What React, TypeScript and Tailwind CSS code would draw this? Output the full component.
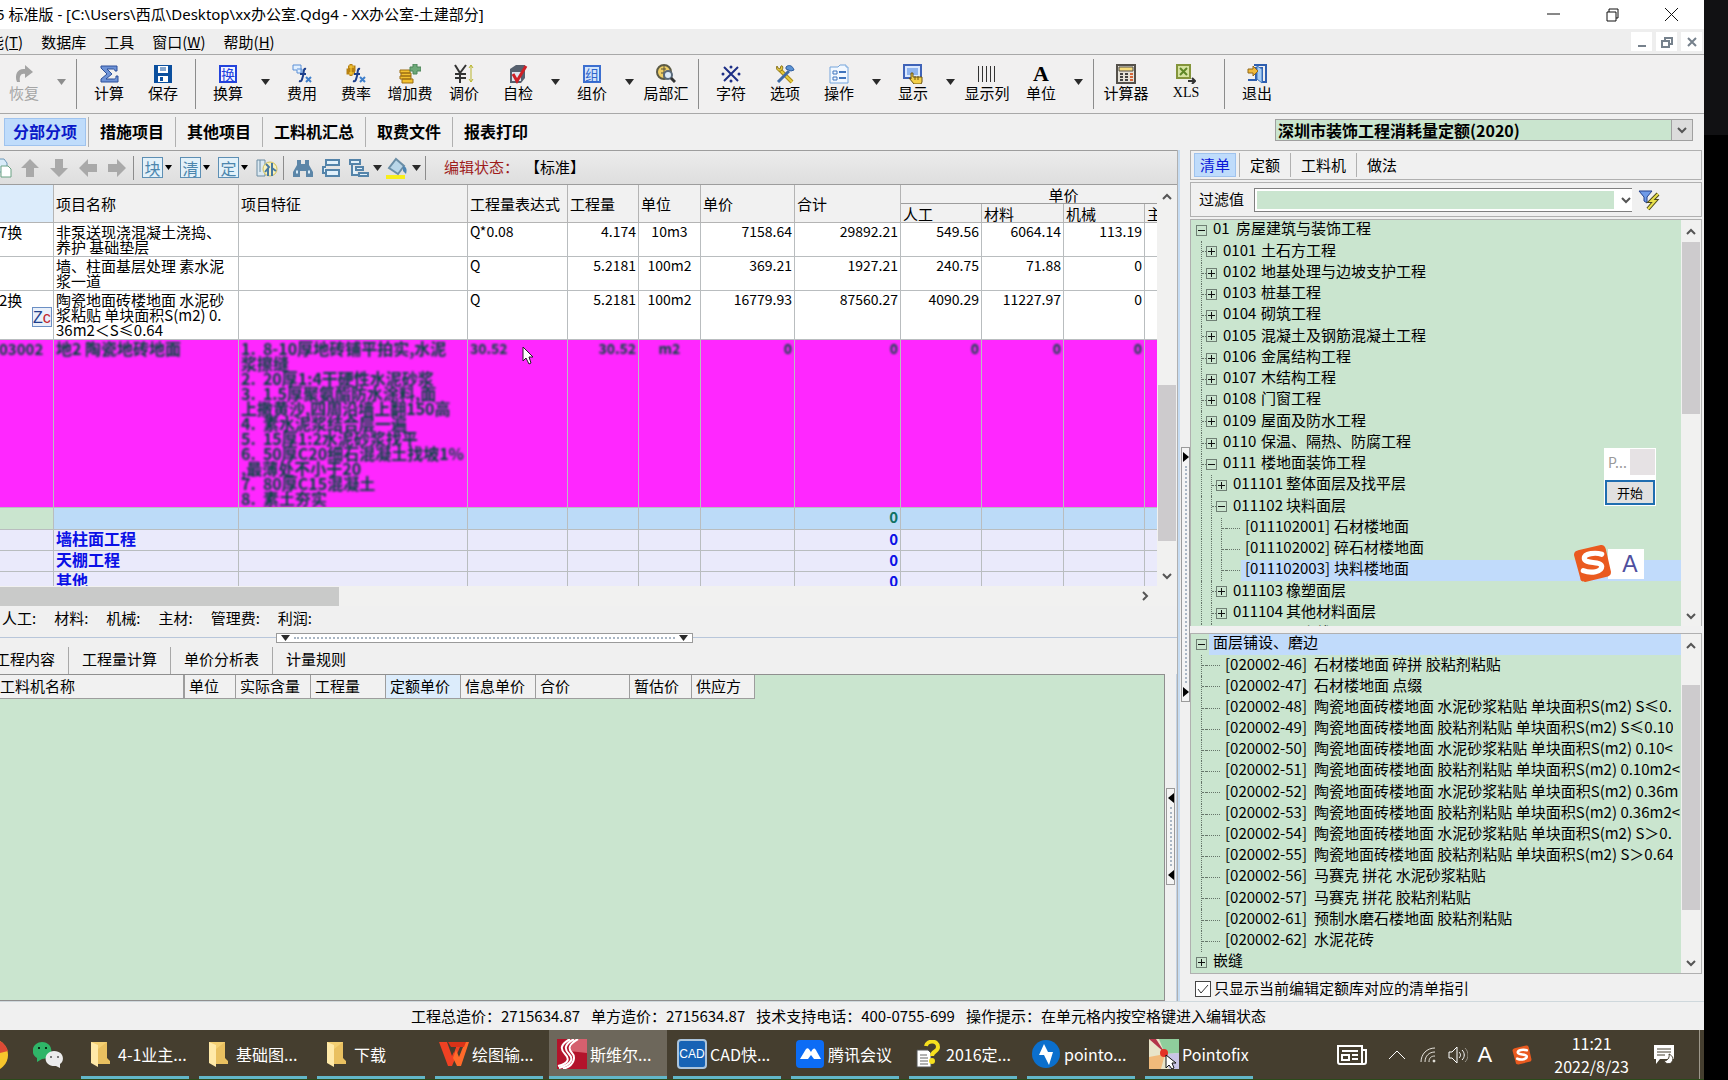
import type { ReactNode } from "react";

const menus = [
  { label: "能", key: "T" },
  { label: "数据库" },
  { label: "工具" },
  { label: "窗口", key: "W" },
  { label: "帮助", key: "H" }
];

type Tool = { label?: string; icon?: ReactNode; kind?: "sep" | "arrow"; disabled?: boolean; wide?: boolean };

function BoxChar({ char, fill }: { char: string; fill?: boolean }) {
  return (
    <span
      className={`flex size-[18px] items-center justify-center border-2 text-[14px] leading-none ${
        fill ? "border-[#3c6fd0] bg-[#d3e6fb] text-[#2f66cc]" : "border-[#2343dc] bg-[#f2f5ff] text-[#1f3fe0]"
      }`}
    >
      {char}
    </span>
  );
}

const icons = {
  redo: (
    <svg viewBox="0 0 20 20" className="size-5">
      <path d="M3 18C0 10 4 4 11 5V1l8 7-8 6v-4C7 9 5 12 6 18z" fill="#a3a3a3" />
    </svg>
  ),
  sum: (
    <svg viewBox="0 0 20 20" className="size-5">
      <path d="M2 2h16v5h-2c0-2-1-2-3-2H8l5 5-6 5h7c2 0 3 0 3-3h2v6H2v-3l6-5-6-6z" fill="#6d92d6" stroke="#2c4f9a" />
    </svg>
  ),
  save: (
    <svg viewBox="0 0 20 20" className="size-5">
      <path d="M1 1h18v18H1z" fill="#0b4f9e" />
      <path d="M5 2h10v7H5z" fill="#fff" />
      <path d="M7 4h6M7 6h6" stroke="#0b4f9e" />
      <path d="M5 12h10v6H5z" fill="#fff" />
      <path d="M7 13h3v4H7z" fill="#0b4f9e" />
    </svg>
  ),
  fee: (
    <svg viewBox="0 0 20 20" className="size-5" fill="none">
      <path d="M1 1h8v8H5V6H1zM5 5h5v5" fill="#e2f0ff" stroke="#5b8fd6" />
      <path d="M14 5c-3-1-2 4-3 7s-1 6-4 5M8 10h6" stroke="#1c3f8c" strokeWidth="2" />
      <path d="M14 13l5 5M19 13l-5 5" stroke="#3f7fcb" strokeWidth="2" />
    </svg>
  ),
  rate: (
    <svg viewBox="0 0 20 20" className="size-5" fill="none">
      <path d="M5 0v12M2 3h6v3H2v3h7" stroke="#b88112" strokeWidth="3" />
      <path d="M5 1v10M3 3h5M3 9h5" stroke="#ffd23b" />
      <path d="M14 5c-3-1-2 4-3 7s-1 6-4 5M8 10h6" stroke="#1c3f8c" strokeWidth="2" />
      <path d="M14 13l5 5M19 13l-5 5" stroke="#3f7fcb" strokeWidth="2" />
    </svg>
  ),
  coins: (
    <svg viewBox="0 0 22 20" className="h-5 w-[22px]">
      <path d="M1 6h10v3H1zM2 9h10v3H2zM1 12h11v3H1zM3 15h11v4H3z" fill="#f2c230" stroke="#9b6d12" />
      <path d="M14 0h4v3h4v4h-4v3h-4V7h-3V3h3z" fill="#6da878" stroke="#4c8458" />
    </svg>
  ),
  yen: (
    <svg viewBox="0 0 20 20" className="size-5" fill="none">
      <path d="M1 1l5 8 6-8M6 9v10M1 10h11M1 14h11" stroke="#333" strokeWidth="2" />
      <path d="M17 1v17M15 4l2-3 2 3M15 15l2 3 2-3" stroke="#b9b52c" />
    </svg>
  ),
  check: (
    <svg viewBox="0 0 20 20" className="size-5">
      <path d="M2 5l6-4h9v13l-4 5H2z" fill="#56606e" />
      <path d="M4 8h9v9H4z" fill="#dfe4ee" />
      <path d="M5 10l4 7L18 2" fill="none" stroke="#cf2026" strokeWidth="3" />
    </svg>
  ),
  search: (
    <svg viewBox="0 0 20 20" className="size-5">
      <circle cx="8" cy="8" r="7" fill="#f0cf66" stroke="#5d5b45" strokeWidth="2" />
      <path d="M8 2v12M5 5h5M5 9h4" stroke="#57523a" strokeWidth="1" />
      <circle cx="12" cy="11" r="4" fill="#dcebf9" stroke="#59697a" strokeWidth="2" />
      <path d="M15 14l4 4" stroke="#333" strokeWidth="3" />
    </svg>
  ),
  symbol: (
    <svg viewBox="0 0 20 20" className="size-5" fill="#1d2f86">
      <path d="M3 3l14 14M17 3L3 17" stroke="#1d2f86" strokeWidth="2" />
      <circle cx="10" cy="3" r="1.5" />
      <circle cx="10" cy="17" r="1.5" />
      <circle cx="2" cy="10" r="1.5" />
      <circle cx="18" cy="10" r="1.5" />
    </svg>
  ),
  tools: (
    <svg viewBox="0 0 20 20" className="size-5" fill="none">
      <path d="M5 6l12 12" stroke="#a88a17" strokeWidth="4" />
      <path d="M5 6l12 12" stroke="#e8cc3c" strokeWidth="2" />
      <path d="M2 2c-2 4 3 7 5 4s0-5-1-4l-1 3-2-1z" fill="#e8cc3c" stroke="#8a7420" />
      <path d="M14 7L3 18" stroke="#3f6aa5" strokeWidth="3" />
      <path d="M11 3c3-3 7-1 8 3l-3 1-5-2z" fill="#5c93d4" stroke="#2c5b9e" />
    </svg>
  ),
  form: (
    <svg viewBox="0 0 20 20" className="size-5" fill="none">
      <path d="M1 3h8l2-2h6v2h2v16H1z" fill="#f2f8ff" stroke="#74a5dc" />
      <path d="M4 7h4v3H4zM4 13h4v3H4z" stroke="#3f74bd" />
      <path d="M10 8h7M10 14h7" stroke="#3f74bd" strokeWidth="2" />
    </svg>
  ),
  display: (
    <svg viewBox="0 0 20 20" className="size-5">
      <path d="M1 1h17v13H1z" fill="#dbe9ff" stroke="#3f63b8" strokeWidth="2" />
      <path d="M4 4h11v7H4z" fill="#8fb4ee" />
      <path d="M8 9h2v4h9v5l-1 2h-7l-5-6 2 1z" fill="#f3d04a" stroke="#6b5310" />
      <path d="M12 12v4M15 12v4" stroke="#6b5310" />
    </svg>
  ),
  columns: (
    <svg viewBox="0 0 20 20" className="size-5">
      <path d="M1.500 2v16M5.500 2v16M9.500 2v16M13.500 2v16M17.500 2v16" stroke="#333" />
    </svg>
  ),
  letter: <span className="font-['Liberation_Serif',serif] text-[22px] leading-5 font-bold">A</span>,
  calculator: (
    <svg viewBox="0 0 20 20" className="size-5">
      <path d="M1 1h18v18H1z" fill="#e6e3da" stroke="#54504a" strokeWidth="2" />
      <path d="M3 3h14v4H3z" fill="#f6dc7c" stroke="#54504a" />
      <path d="M4 10h3M9 10h3M4 13h3M9 13h3M4 16h3M9 16h3" stroke="#444" strokeWidth="2" />
      <path d="M14 10h3M14 13h3M14 16h3" stroke="#d4663a" strokeWidth="2" />
    </svg>
  ),
  xls: (
    <svg viewBox="0 0 20 20" className="size-5" fill="none">
      <path d="M1 1h13v13H1z" fill="#d6e3a0" stroke="#84953b" strokeWidth="2" />
      <path d="M4 4l7 7M11 4l-7 7" stroke="#5f8727" strokeWidth="2" />
      <path d="M12 17h6M16 14l3 3-3 3" stroke="#333" strokeWidth="2" />
    </svg>
  ),
  exit: (
    <svg viewBox="0 0 20 20" className="size-5">
      <path d="M7 1h12v17h-4V4H9v12H1" fill="none" stroke="#2f5fb0" strokeWidth="2" />
      <path d="M10 2l5 3v14l-5-4z" fill="#a9cff6" stroke="#3f74bd" />
      <path d="M1 5h5V2l5 5-5 5V9H1z" fill="#f0b93a" stroke="#92681a" />
    </svg>
  )
};

const tools: Tool[] = [
  { label: "恢复", icon: icons.redo, disabled: true },
  { kind: "arrow", disabled: true },
  { kind: "sep" },
  { label: "计算", icon: icons.sum },
  { label: "保存", icon: icons.save },
  { kind: "sep" },
  { label: "换算", icon: <BoxChar char="换" /> },
  { kind: "arrow" },
  { label: "费用", icon: icons.fee },
  { label: "费率", icon: icons.rate },
  { label: "增加费", icon: icons.coins },
  { label: "调价", icon: icons.yen },
  { label: "自检", icon: icons.check },
  { kind: "arrow" },
  { label: "组价", icon: <BoxChar char="组" fill /> },
  { kind: "arrow" },
  { label: "局部汇", icon: icons.search },
  { kind: "sep" },
  { label: "字符", icon: icons.symbol },
  { label: "选项", icon: icons.tools },
  { label: "操作", icon: icons.form },
  { kind: "arrow" },
  { label: "显示", icon: icons.display },
  { kind: "arrow" },
  { label: "显示列", icon: icons.columns },
  { label: "单位", icon: icons.letter },
  { kind: "arrow" },
  { kind: "sep" },
  { label: "计算器", icon: icons.calculator },
  { label: "XLS", icon: icons.xls, wide: true },
  { kind: "sep" },
  { label: "退出", icon: icons.exit }
];

const mainTabs = ["分部分项", "措施项目", "其他项目", "工料机汇总", "取费文件", "报表打印"];

const itemRows = [
  {
    code: "7换",
    name: "非泵送现浇混凝土浇捣、\n养护 基础垫层",
    height: "h-[34px]",
    values: ["Q*0.08", "4.174", "10m3", "7158.64", "29892.21", "549.56", "6064.14", "113.19"]
  },
  {
    code: "",
    name: "墙、柱面基层处理 素水泥\n浆一道",
    height: "h-[34px]",
    values: ["Q", "5.2181", "100m2", "369.21", "1927.21", "240.75", "71.88", "0"]
  },
  {
    code: "2换",
    name: "陶瓷地面砖楼地面 水泥砂\n浆粘贴 单块面积S(m2) 0.\n36m2＜S≤0.64",
    height: "h-[49px]",
    badge: true,
    values: ["Q", "5.2181", "100m2", "16779.93", "87560.27", "4090.29", "11227.97", "0"]
  }
];

const feature = `1.  8-10厚地砖铺平拍实,水泥
浆擦缝
2.  20厚1:4干硬性水泥砂浆
3.  1.5厚聚氨酯防水涂料,面
上撒黄沙,四周沿墙上翻150高
4.  素水泥浆结合层一遍
5.  15厚1:2水泥砂浆找平
6.  50厚C20细石混凝土找坡1%
,最薄处不小于20
7.  80厚C15混凝土
8.  素土夯实`;

const sections = ["", "墙柱面工程", "天棚工程", "其他"];

const detailTabs = ["工程内容", "工程量计算", "单价分析表", "计量规则"];

const detailColumns = [
  { label: "工料机名称", width: "w-[185px] border-r-2" },
  { label: "单位", width: "w-[51px]" },
  { label: "实际含量", width: "w-[75px]" },
  { label: "工程量", width: "w-[75px]" },
  { label: "定额单价", width: "w-[75px] bg-[#dcecfb]" },
  { label: "信息单价", width: "w-[75px]" },
  { label: "合价", width: "w-[94px]" },
  { label: "暂估价", width: "w-[62px]" },
  { label: "供应方", width: "w-[63px]" }
];

type Node = { depth: number; code?: string; name: string; state?: "open" | "closed"; selected?: boolean };

const listTree: Node[] = [
  { depth: 0, code: "01", name: "房屋建筑与装饰工程", state: "open" },
  { depth: 1, code: "0101", name: "土石方工程", state: "closed" },
  { depth: 1, code: "0102", name: "地基处理与边坡支护工程", state: "closed" },
  { depth: 1, code: "0103", name: "桩基工程", state: "closed" },
  { depth: 1, code: "0104", name: "砌筑工程", state: "closed" },
  { depth: 1, code: "0105", name: "混凝土及钢筋混凝土工程", state: "closed" },
  { depth: 1, code: "0106", name: "金属结构工程", state: "closed" },
  { depth: 1, code: "0107", name: "木结构工程", state: "closed" },
  { depth: 1, code: "0108", name: "门窗工程", state: "closed" },
  { depth: 1, code: "0109", name: "屋面及防水工程", state: "closed" },
  { depth: 1, code: "0110", name: "保温、隔热、防腐工程", state: "closed" },
  { depth: 1, code: "0111", name: "楼地面装饰工程", state: "open" },
  { depth: 2, code: "011101", name: "整体面层及找平层", state: "closed" },
  { depth: 2, code: "011102", name: "块料面层", state: "open" },
  { depth: 3, code: "[011102001]", name: "石材楼地面" },
  { depth: 3, code: "[011102002]", name: "碎石材楼地面" },
  { depth: 3, code: "[011102003]", name: "块料楼地面", selected: true },
  { depth: 2, code: "011103", name: "橡塑面层", state: "closed" },
  { depth: 2, code: "011104", name: "其他材料面层", state: "closed" },
  { depth: 2, code: "011105", name: "踢脚线", state: "closed" }
];

const quotaTree: Node[] = [
  { depth: 0, name: "面层铺设、磨边", state: "open", selected: true },
  { depth: 1, code: "[020002-46]", name: "石材楼地面 碎拼 胶粘剂粘贴" },
  { depth: 1, code: "[020002-47]", name: "石材楼地面 点缀" },
  { depth: 1, code: "[020002-48]", name: "陶瓷地面砖楼地面 水泥砂浆粘贴 单块面积S(m2) S≤0." },
  { depth: 1, code: "[020002-49]", name: "陶瓷地面砖楼地面 胶粘剂粘贴 单块面积S(m2) S≤0.10" },
  { depth: 1, code: "[020002-50]", name: "陶瓷地面砖楼地面 水泥砂浆粘贴 单块面积S(m2) 0.10<" },
  { depth: 1, code: "[020002-51]", name: "陶瓷地面砖楼地面 胶粘剂粘贴 单块面积S(m2) 0.10m2<" },
  { depth: 1, code: "[020002-52]", name: "陶瓷地面砖楼地面 水泥砂浆粘贴 单块面积S(m2) 0.36m" },
  { depth: 1, code: "[020002-53]", name: "陶瓷地面砖楼地面 胶粘剂粘贴 单块面积S(m2) 0.36m2<" },
  { depth: 1, code: "[020002-54]", name: "陶瓷地面砖楼地面 水泥砂浆粘贴 单块面积S(m2) S＞0." },
  { depth: 1, code: "[020002-55]", name: "陶瓷地面砖楼地面 胶粘剂粘贴 单块面积S(m2) S＞0.64" },
  { depth: 1, code: "[020002-56]", name: "马赛克 拼花 水泥砂浆粘贴" },
  { depth: 1, code: "[020002-57]", name: "马赛克 拼花 胶粘剂粘贴" },
  { depth: 1, code: "[020002-61]", name: "预制水磨石楼地面 胶粘剂粘贴" },
  { depth: 1, code: "[020002-62]", name: "水泥花砖" },
  { depth: 0, name: "嵌缝", state: "closed" }
];

function codeWidth(code: string) {
  if (code.length > 6) return "w-[89px]";
  if (code.length === 6) return "w-[53px]";
  if (code.length === 4) return "w-[38px]";
  return "w-[23px]";
}

function Tree({ nodes, label, className }: { nodes: Node[]; label: string; className: string }) {
  return (
    <ul aria-label={label} className={`flex min-w-0 flex-1 flex-col ${className}`}>
      {nodes.map((node) => (
        <li key={(node.code ?? "") + node.name} className="flex min-h-0 flex-1 items-center pl-[5px] whitespace-nowrap">
          {Array.from({ length: node.depth }, (_, i) => (
            <span key={i} className="flex h-full w-[10px] shrink-0 items-center pl-[5px]">
              <span className="h-full border-l border-dotted border-[#66756a]" />
              {i === node.depth - 1 && <span className="flex-1 border-t border-dotted border-[#66756a]" />}
            </span>
          ))}
          {node.state ? (
            <button
              type="button"
              aria-label={node.state === "open" ? "收起" : "展开"}
              className="mr-[2px] flex size-[11px] shrink-0 items-center justify-center border border-[#6f7f74]"
            >
              <svg viewBox="0 0 7 7" className="size-[7px]" stroke="#111">
                <path d={node.state === "open" ? "M0 3.500h7" : "M0 3.500h7M3.500 0v7"} />
              </svg>
            </button>
          ) : (
            <span className="mr-px w-[14px] shrink-0 border-t border-dotted border-[#66756a]" />
          )}
          <span className={`flex h-full min-w-0 flex-1 items-center pb-1 pl-1 ${node.selected ? "bg-[#c1dbfb]" : ""}`}>
            {node.code && <span className={`shrink-0 ${codeWidth(node.code)}`}>{node.code}</span>}
            <span className="overflow-hidden">{node.name}</span>
          </span>
        </li>
      ))}
    </ul>
  );
}

function Chevron({ turn = "" }: { turn?: string }) {
  return (
    <svg viewBox="0 0 12 12" className={`size-3 ${turn}`} fill="none" stroke="#555" strokeWidth="2">
      <path d="M2 8l4-4 4 4" />
    </svg>
  );
}

function VScroll({ before, thumb }: { before: string; thumb: string }) {
  return (
    <div className="flex w-5 shrink-0 flex-col items-center bg-[#f1f1f0]">
      <span className={`flex w-full shrink-0 justify-center pt-[6px] ${before}`}>
        <Chevron />
      </span>
      <span className={`w-[18px] bg-[#cdcbcd] ${thumb}`} />
      <span className="mt-auto pb-1">
        <Chevron turn="rotate-180" />
      </span>
    </div>
  );
}

function Caret({ muted }: { muted?: boolean }) {
  return (
    <svg viewBox="0 0 9 6" className="h-[6px] w-[9px]" fill={muted ? "#8d8d8d" : "#2a2a2a"}>
      <path d="M0 0h9L4.500 6z" />
    </svg>
  );
}

function Toolbar() {
  return (
    <div className="flex h-[59px] shrink-0 items-stretch border-b border-[#a8a8a8] bg-[#f1f0f0]">
      <div className="-ml-[3px] flex">
        {tools.map((tool, i) => {
          if (tool.kind === "sep")
            return (
              <span key={i} className="flex w-[11px] justify-center py-1">
                <span className="border-l border-[#8c8c8c]" />
              </span>
            );
          if (tool.kind === "arrow")
            return (
              <button key={i} type="button" aria-label="更多" className="flex w-5 items-center justify-center pb-1">
                <Caret muted={tool.disabled} />
              </button>
            );
          return (
            <button
              key={i}
              type="button"
              className={`flex flex-col items-center pt-2 ${
                tool.wide ? "w-[66px] font-['Liberation_Serif',serif] text-[14px]" : "w-[54px] text-[15px]"
              } leading-4 ${tool.disabled ? "text-[#a5a5a5]" : ""}`}
            >
              <span className="flex h-[22px] items-center">{tool.icon}</span>
              {tool.label}
            </button>
          );
        })}
      </div>
    </div>
  );
}

function GlyphButton({ char }: { char: string }) {
  return (
    <button type="button" className="flex items-center gap-[2px]">
      <span className="flex size-[21px] items-center justify-center border border-[#5d8fb4] bg-[#e3f1f9] text-[16px] leading-none text-[#4c86ad]">
        {char}
      </span>
      <svg viewBox="0 0 7 5" className="h-[5px] w-[7px]">
        <path d="M0 0h7L3.500 5z" />
      </svg>
    </button>
  );
}

function Divider() {
  return <span className="h-6 border-l border-[#8c8c8c]" />;
}

function EditBar() {
  const arrows = ["", "rotate-180", "-rotate-90", "rotate-90"];
  return (
    <div className="flex h-[35px] shrink-0 items-center border-y border-[#9d9d9d] bg-linear-to-b from-[#ececec] to-[#dedede] text-[15px]">
      <svg viewBox="0 0 20 20" className="-ml-2 size-5" fill="none" stroke="#6d98b8">
        <path d="M4 1h8l3 4v9H4z" fill="#d9ecf9" />
        <path d="M9 8h7l3 3v8H9z" fill="#fff" stroke="#6aa284" />
      </svg>
      <div className="ml-2 flex gap-[9px]">
        {arrows.map((turn) => (
          <svg key={turn} viewBox="0 0 20 20" className={`size-5 ${turn}`} fill="#a9a9a9">
            <path d="M10 1l9 9h-5v9H6v-9H1z" />
          </svg>
        ))}
      </div>
      <div className="ml-[6px] flex items-center gap-2">
        <Divider />
        <GlyphButton char="块" />
        <GlyphButton char="清" />
        <GlyphButton char="定" />
        <svg viewBox="0 0 22 20" className="h-5 w-[22px]" fill="none">
          <path d="M1 2h8v16H1zM4 2v12" fill="#dbe9f2" stroke="#6c8da3" />
          <circle cx="14" cy="11" r="7" fill="#f8f1bd" stroke="#d1c05a" />
          <path d="M10 6l3 3-4 5M12 10v8M16 5v13M16 10l4 3" stroke="#4879a1" strokeWidth="2" />
        </svg>
      </div>
      <div className="ml-[5px] flex items-center gap-[9px]">
        <Divider />
        <svg viewBox="0 0 20 18" className="h-[18px] w-5" fill="#5c86a8">
          <path d="M4 1h4v4h4V1h4v5l4 7v5h-7v-6H7v6H0v-5l4-7z" />
          <path d="M3 13h2M15 13h2" stroke="#d8ecf9" strokeWidth="3" />
        </svg>
        <svg viewBox="0 0 18 18" className="size-[18px]" fill="#e2f1fb" stroke="#5484aa" strokeWidth="2">
          <path d="M4 1h13v5H4zM4 11h13v6H4zM4 8H1v6h3" />
        </svg>
        <svg viewBox="0 0 20 18" className="h-[18px] w-5" fill="#e2f1fb" stroke="#5484aa" strokeWidth="2">
          <path d="M1 1h10v4H1zM7 8h7v3H7zM10 14h9v3h-9zM3 5v11h6" />
        </svg>
      </div>
      <span className="mr-1 ml-1">
        <Caret />
      </span>
      <svg viewBox="0 0 22 22" className="h-[22px] w-[22px]">
        <path d="M0 18h19v4H0z" fill="#f7ee1c" />
        <path d="M10 2l8 7-6 8-9-6z" fill="#b9d6e8" stroke="#6b8ea6" strokeWidth="2" />
        <path d="M17 9c4 1 4 4 3 8l-3-3z" fill="#4f86b3" />
      </svg>
      <span className="mr-1 ml-1">
        <Caret />
      </span>
      <Divider />
      <span className="ml-[18px] text-[#9e1c1c]">编辑状态：</span>
      <span className="ml-[6px]">【标准】</span>
    </div>
  );
}

const th = "overflow-hidden border-r border-b border-[#b4b4b4] pl-[2px] text-left font-normal whitespace-nowrap";
const td = "border-r border-b border-[#b9bdbf] px-[2px] pt-px align-top overflow-hidden whitespace-nowrap";

function valueAlign(i: number) {
  if (i === 0) return "text-left";
  if (i === 2) return "text-center";
  return "text-right";
}

function ItemTable() {
  return (
    <div className="h-full min-w-0 flex-1 overflow-hidden bg-white">
      <table className="w-[1226px] table-fixed border-separate border-spacing-0 text-[15px] leading-[15px]">
        <colgroup>
          <col className="w-[54px]" />
          <col className="w-[185px]" />
          <col className="w-[229px]" />
          <col className="w-[100px]" />
          <col className="w-[71px]" />
          <col className="w-[62px]" />
          <col className="w-[94px]" />
          <col className="w-[106px]" />
          <col className="w-[81px]" />
          <col className="w-[82px]" />
          <col className="w-[81px]" />
          <col className="w-[81px]" />
        </colgroup>
        <thead className="bg-[#f1f1f1]">
          <tr className="h-[19px]">
            <th rowSpan={2} aria-label="编码" className={`${th} bg-[#dcecfb]`} />
            {["项目名称", "项目特征", "工程量表达式", "工程量", "单位", "单价", "合计"].map((head) => (
              <th key={head} rowSpan={2} className={th}>
                {head}
              </th>
            ))}
            <th colSpan={4} className="border-b border-[#9d9d9d] text-center font-normal">
              单价
            </th>
          </tr>
          <tr className="h-[19px]">
            {["人工", "材料", "机械", "主材"].map((head) => (
              <th key={head} className={th}>
                {head}
              </th>
            ))}
          </tr>
        </thead>
        <tbody>
          {itemRows.map((row) => (
            <tr key={row.name} className={row.height}>
              <td className={td}>
                {row.code && <div className="-ml-[3px]">{row.code}</div>}
                {row.badge && (
                  <div className="ml-[30px] h-5 w-5 border border-[#6b8fc4] bg-[#e9f0fa] font-['Liberation_Sans',sans-serif] text-[16px] leading-5">
                    <span className="text-[#1f3f8c]">Z</span>
                    <span className="text-[#c01f2c]">c</span>
                  </div>
                )}
              </td>
              <td className={`${td} whitespace-pre`}>{row.name}</td>
              <td className={td} />
              {row.values.map((value, i) => (
                <td key={i} className={`${td} text-[14px] ${valueAlign(i)}`}>
                  {value}
                </td>
              ))}
              <td className={td} />
            </tr>
          ))}
          <tr className="h-[168px] bg-[#ff27ff] font-bold text-[#004a3c]">
            <td className={td}>
              <div className="-ml-[3px] blur-[1px]">03002</div>
            </td>
            <td className={`${td} text-[16px]`}>
              <div className="blur-[1px]">地2 陶瓷地砖地面</div>
            </td>
            <td className={`${td} text-[16px]`}>
              <div className="whitespace-pre blur-[1px]">{feature}</div>
            </td>
            {["30.52", "30.52", "m2", "0", "0", "0", "0", "0"].map((value, i) => (
              <td key={i} className={`${td} text-[14px] ${valueAlign(i)}`}>
                <div className="blur-[1px]">{value}</div>
              </td>
            ))}
            <td className={td} />
          </tr>
          {sections.map((name, i) => (
            <tr
              key={name}
              className={`font-bold ${i === 0 ? "h-[22px] bg-[#bcdbf8] text-[#0f7264]" : "h-[21px] bg-[#eaeafb] text-[#0a10e6]"}`}
            >
              <td className={`${td} ${i === 0 ? "bg-[#cae5cf]" : ""}`} />
              <td className={`${td} text-[16px]`}>{name}</td>
              <td className={td} />
              <td className={td} />
              <td className={td} />
              <td className={td} />
              <td className={td} />
              <td className={`${td} text-right`}>0</td>
              <td className={td} />
              <td className={td} />
              <td className={td} />
              <td className={td} />
            </tr>
          ))}
        </tbody>
      </table>
    </div>
  );
}

function SideHandle({ direction, className }: { direction: "left" | "right"; className: string }) {
  const path = direction === "left" ? "M7 0v10L1 5z" : "M1 0v10l6-5z";
  return (
    <div className={`flex w-[9px] shrink-0 flex-col items-center border border-[#9a9a9a] bg-[#f4f4f4] py-1 ${className}`}>
      <svg viewBox="0 0 8 10" className="h-[10px] w-2 shrink-0">
        <path d={path} />
      </svg>
      <span className="my-1 flex-1 border-l-2 border-dotted border-[#a9b6c4]" />
      <svg viewBox="0 0 8 10" className="h-[10px] w-2 shrink-0">
        <path d={path} />
      </svg>
    </div>
  );
}

function DetailPanel() {
  return (
    <div className="flex min-h-0 flex-1 flex-col">
      <div className="flex h-[26px] shrink-0 items-center gap-[18px] pb-px pl-[2px] text-[15px]">
        {["人工:", "材料:", "机械:", "主材:", "管理费:", "利润:"].map((label) => (
          <span key={label}>{label}</span>
        ))}
      </div>
      <div className="flex h-[11px] shrink-0 items-center">
        <span className="w-[276px] border-t border-[#b8c6da]" />
        <div className="flex h-[10px] w-[417px] items-center gap-1 border border-[#9a9a9a] bg-white px-1">
          <Caret />
          <span className="flex-1 border-t-2 border-dotted border-[#a9b6c4]" />
          <Caret />
        </div>
        <span className="flex-1 border-t border-[#b8c6da]" />
      </div>
      <div className="flex h-[31px] shrink-0 items-stretch pt-1 text-[15px]">
        {detailTabs.map((tab, i) => (
          <button
            key={tab}
            type="button"
            className={`px-[13px] pb-[3px] ${i === 0 ? "-ml-[18px]" : "border-l border-[#a8a8a8]"}`}
          >
            {tab}
          </button>
        ))}
      </div>
      <div className="flex min-h-0 flex-1">
        <div className="min-w-0 flex-1 border-t border-r border-b border-[#8f8f8f] bg-[#cae5cf]">
          <table className="w-[755px] table-fixed border-separate border-spacing-0 text-[15px]">
            <thead>
              <tr className="h-6 bg-[#f1f1f1]">
                {detailColumns.map((column) => (
                  <th
                    key={column.label}
                    className={`border-r border-b border-[#9d9d9d] pb-[2px] pl-1 text-left leading-5 font-normal whitespace-nowrap first:pl-0 ${column.width}`}
                  >
                    {column.label}
                  </th>
                ))}
              </tr>
            </thead>
          </table>
        </div>
        <div className="flex w-3 shrink-0 flex-col items-center border-r border-[#c3d2e4]">
          <SideHandle direction="left" className="mt-[114px] h-[97px]" />
        </div>
      </div>
    </div>
  );
}

function RightPanel() {
  return (
    <div className="flex w-[512px] shrink-0 flex-col text-[15px]">
      <div className="flex h-[30px] shrink-0 items-stretch border border-[#b0b0b0] p-[2px] leading-5">
        {["清单", "定额", "工料机", "做法"].map((tab, i) => (
          <button
            key={tab}
            type="button"
            className={
              i === 0
                ? "mr-[3px] ml-px border border-[#9fc3ee] bg-[#bfdcfb] px-[5px] text-[#0a18d8]"
                : "border-l border-[#b0b0b0] px-[10px]"
            }
          >
            {tab}
          </button>
        ))}
      </div>
      <div className="mt-[2px] flex h-[35px] shrink-0 items-center border border-[#b0b0b0] pl-2">
        <label htmlFor="filter" className="mr-[10px]">
          过滤值
        </label>
        <div className="flex h-6 w-[378px] items-center border border-r-0 border-[#808080] bg-white py-[2px] pl-[2px]">
          <input id="filter" className="h-[18px] min-w-0 flex-1 bg-[#cae5cf] outline-none" />
          <span className="flex w-[18px] justify-end">
            <Chevron turn="rotate-180" />
          </span>
        </div>
        <svg viewBox="0 0 22 22" className="ml-[6px] size-[22px]">
          <path d="M1 2h13L9 8v6l-3-2V8z" fill="#6f9be8" stroke="#23418c" />
          <path d="M20 5l-7 7h4l-7 8" fill="none" stroke="#4d4a1c" strokeWidth="4" />
          <path d="M20 5l-7 7h4l-7 8" fill="none" stroke="#e9e04a" strokeWidth="2" />
        </svg>
      </div>
      <div className="mt-[2px] flex h-[407px] shrink-0 overflow-hidden border-x border-t border-[#b0b0b0] bg-[#cae5cf]">
        <Tree nodes={listTree} label="清单" className="h-[425px]" />
        <VScroll before="h-[22px]" thumb="h-[172px]" />
      </div>
      <div className="mt-[7px] flex min-h-0 flex-1 overflow-hidden border border-[#b0b0b0] bg-[#cae5cf]">
        <Tree nodes={quotaTree} label="定额指引" className="h-full" />
        <VScroll before="h-[51px]" thumb="h-[225px]" />
      </div>
      <label className="flex h-[27px] shrink-0 items-center gap-[3px] pt-[2px] pl-[5px]">
        <span className="grid size-4">
          <input
            type="checkbox"
            defaultChecked
            className="peer col-start-1 row-start-1 size-4 appearance-none border border-[#444] bg-white"
          />
          <svg
            viewBox="0 0 16 16"
            className="pointer-events-none invisible col-start-1 row-start-1 size-4 peer-checked:visible"
            fill="none"
            stroke="#333"
          >
            <path d="M3 8l3 4 7-8" />
          </svg>
        </span>
        只显示当前编辑定额库对应的清单指引
      </label>
    </div>
  );
}

const folder = (
  <svg viewBox="0 0 20 26" className="h-[26px] w-5">
    <path d="M1 1h16v20H1z" fill="#f3cf72" />
    <path d="M17 1v16l3 3v3H8V8z" fill="#e9c060" />
    <path d="M1 1l7 3v22l-7-4z" fill="#ffe9a8" />
  </svg>
);

const tasks = [
  { label: "4-1业主...", icon: folder },
  { label: "基础图...", icon: folder },
  { label: "下载", icon: folder },
  {
    label: "绘图输...",
    icon: (
      <svg viewBox="0 0 30 26" className="h-[26px] w-[30px]">
        <path d="M0 1h8l5 14 4-9h4l-8 19H9z" fill="#ef4123" />
        <path d="M17 9l3 7L26 1h4l-8 24h-4l-4-8z" fill="#ff6a2a" />
        <path d="M9 1h18l-2 5H12z" fill="#d93218" />
        <path d="M12 6l3 6 2-6z" fill="#453e2f" />
      </svg>
    )
  },
  {
    label: "斯维尔...",
    active: true,
    icon: (
      <svg viewBox="0 0 30 30" className="size-[30px]" fill="none">
        <path d="M0 0h30v30H0z" fill="#b3132b" />
        <path d="M18 0h12v14L12 12z" fill="#d5606e" />
        <path
          d="M13 0C2 6 4 11 8 15s5 9-7 12M17 0C6 6 8 11 12 15s4 10-10 14M21 0C10 6 12 11 15 14s4 12-9 16"
          stroke="#fff"
          strokeWidth="2"
        />
      </svg>
    )
  },
  {
    label: "CAD快...",
    icon: (
      <span className="flex size-[30px] items-center justify-center rounded-sm border-2 border-[#aac4dc] bg-[#1763b5] font-['Liberation_Sans',sans-serif] text-[12px] text-white">
        CAD
      </span>
    )
  },
  {
    label: "腾讯会议",
    icon: (
      <svg viewBox="0 0 28 28" className="size-7">
        <rect width="28" height="28" rx="4" fill="#0c6cf5" />
        <path d="M4 19l6-10c2-2 3 0 5 3 3-5 4-4 6 0l4 7h-7l-3-4-3 4z" fill="#fff" />
      </svg>
    )
  },
  {
    label: "2016定...",
    icon: (
      <svg viewBox="0 0 26 28" className="h-7 w-[26px]">
        <path d="M2 10h11l3 3v14H2z" fill="#fff" stroke="#555" />
        <path d="M5 15h7M5 18h8M5 21h8M5 24h8" stroke="#666" />
        <path d="M11 6c1-6 12-6 12 1 0 5-6 4-6 9" fill="none" stroke="#f6df1e" strokeWidth="4" />
        <circle cx="17" cy="21" r="3" fill="#f6df1e" />
      </svg>
    )
  },
  {
    label: "pointo...",
    icon: (
      <svg viewBox="0 0 28 28" className="size-7">
        <circle cx="14" cy="14" r="14" fill="#0b6fcd" />
        <path d="M12 4l-5 11h5l5 10 4-13h-5z" fill="#fff" />
      </svg>
    )
  },
  {
    label: "Pointofix",
    icon: (
      <svg viewBox="0 0 30 30" className="size-[30px]">
        <path d="M0 0h30v30H0z" fill="#e8e4c9" />
        <path d="M10 0h20v14L16 15z" fill="#8fce9c" />
        <path d="M16 15l14-1v16H20z" fill="#c8c4e6" />
        <path d="M0 18l16-3-4 15H0z" fill="#f1ba7b" />
        <path d="M0 0h7l9 14z" fill="#b3344a" />
        <circle cx="15" cy="14" r="4" fill="#e33125" />
        <path d="M17 16v13l3-3 3 4 2-1-2-5h4z" fill="#fff" stroke="#111" />
      </svg>
    )
  }
];

function SogouMark({ className }: { className: string }) {
  return (
    <svg viewBox="0 0 38 38" className={className} fill="none">
      <path d="M5 6l22-5c3 0 4 1 5 4l5 22c0 3-1 4-4 5l-21 5c-3 0-5-1-5-4L1 11c0-3 1-4 4-5z" fill="#ea5a1f" />
      <path
        d="M28 10c-6-2-17-1-17 4 0 6 17 2 17 8 0 5-10 7-18 4"
        stroke="#fff"
        strokeWidth="5"
        strokeLinecap="round"
      />
    </svg>
  );
}

function Taskbar() {
  return (
    <div className="flex h-[50px] shrink-0 border-b border-[#2b4a1a] bg-[#453e2f] text-[16px] text-white">
      <div className="flex w-[81px] shrink-0 items-center overflow-hidden">
        <svg viewBox="0 0 32 32" className="-ml-6 size-8 shrink-0">
          <circle cx="16" cy="16" r="16" fill="#f7c52c" />
          <path d="M16 16V0c8 0 14 5 16 12z" fill="#dc4a36" />
        </svg>
        <svg viewBox="0 0 30 26" className="ml-[25px] h-[26px] w-[30px] shrink-0">
          <path d="M9 0c12 0 13 17 0 17l-5 3v-4C-4 11 0 0 9 0z" fill="#2fb568" />
          <circle cx="6" cy="6" r="1" />
          <circle cx="13" cy="6" r="1" />
          <path d="M21 9c10 0 11 10 6 13v4l-4-2c-14 1-13-15-2-15z" fill="#ececec" />
          <circle cx="18" cy="15" r="1" fill="#555" />
          <circle cx="25" cy="15" r="1" fill="#555" />
        </svg>
      </div>
      {tasks.map((task) => (
        <button
          key={task.label}
          type="button"
          className={`flex shrink-0 items-center gap-[3px] border-b-[3px] border-[#62b7c9] pt-[2px] whitespace-nowrap ${
            task.active ? "mr-[6px] -ml-1 w-[118px] bg-[#6d675b] pl-2" : "mr-[10px] w-[108px] pl-1"
          }`}
        >
          <span className="flex w-[30px] shrink-0 justify-center">{task.icon}</span>
          {task.label}
        </button>
      ))}
      <div className="ml-auto flex items-center">
        <svg viewBox="0 0 30 20" className="h-5 w-[30px]" fill="none" stroke="#fff" strokeWidth="2">
          <path d="M1 1h24v18H3c-1 0-2-1-2-2zM25 5h4v12c0 1-1 2-2 2h-2M5 6h16M5 10h7v5H5zM15 10h6M15 14h6" />
        </svg>
        <svg viewBox="0 0 18 10" className="ml-[21px] h-[10px] w-[18px]" fill="none" stroke="#fff">
          <path d="M1 9l8-8 8 8" />
        </svg>
        <svg viewBox="0 0 16 16" className="ml-[14px] size-4" fill="none" stroke="#e6e3dc">
          <path d="M1 15C1 7 7 1 15 1M5 15c0-6 4-10 10-10M9 15c0-4 2-6 6-6" />
          <circle cx="14" cy="14" r="1" fill="#fff" />
        </svg>
        <svg viewBox="0 0 20 18" className="ml-3 h-[18px] w-5" fill="none" stroke="#fff">
          <path d="M1 6h3l5-5v16l-5-5H1zM11 6c2 2 2 4 0 6M14 4c3 3 3 7 0 10" />
          <path d="M17 2c4 4 4 10 0 14" stroke="#99948a" />
        </svg>
        <span className="ml-[10px] font-['Liberation_Sans',sans-serif] text-[22px]">A</span>
        <SogouMark className="ml-5 size-5" />
        <div className="ml-[22px] text-center leading-[23px]">
          <div>11:21</div>
          <div>2022/8/23</div>
        </div>
        <svg viewBox="0 0 20 20" className="mx-[25px] size-5">
          <path d="M0 0h20v14H6l-4 5v-5H0z" fill="#fff" />
          <path d="M3 4h14M3 7h14M3 10h8" stroke="#453e2f" />
          <path d="M15 9c1 4-2 7-5 7 2 4 9 4 9-3-1-2-2-3-4-4z" fill="#fff" stroke="#453e2f" />
        </svg>
        <span className="mr-1 h-[49px] border-l border-[#9d978a]" />
      </div>
    </div>
  );
}

export default function App() {
  return (
    <div className="relative flex h-screen overflow-hidden bg-black font-['Noto_Sans_CJK_SC',sans-serif] text-black">
      <div className="flex min-w-0 flex-1 flex-col bg-[#f0f0f0]">
        <header className="flex h-[29px] shrink-0 items-center justify-between bg-white text-[15px] whitespace-nowrap">
          <h1 className="-ml-1 font-['Noto_Sans','Noto_Sans_CJK_SC',sans-serif]">
            5 标准版 - [C:\Users\西瓜\Desktop\xx办公室.Qdg4 - XX办公室-土建部分]
          </h1>
          <div className="mr-[26px] flex gap-[46px]">
            {["M0 6h13", "M1 4h9v9H1zM3 4V1h9v9h-2", "M0 0l13 13M13 0L0 13"].map((path, i) => (
              <button key={path} type="button" aria-label={["最小化", "还原", "关闭"][i]}>
                <svg viewBox="0 0 13 14" className="h-[14px] w-[13px]" fill="none" stroke="#111">
                  <path d={path} />
                </svg>
              </button>
            ))}
          </div>
        </header>
        <nav className="flex h-[26px] shrink-0 items-center justify-between border-b border-[#a8a8a8] bg-[#eeeeee] text-[15px]">
          <div className="-ml-[11px] flex gap-[18px]">
            {menus.map((menu) => (
              <button key={menu.label} type="button" className="leading-5">
                {menu.label}
                {menu.key && (
                  <>
                    (<u>{menu.key}</u>)
                  </>
                )}
              </button>
            ))}
          </div>
          <div className="mr-[2px] flex gap-1">
            {["M2 10h8", "M1 5h7v6H1zM4 5V2h7v6H8", "M2 2l8 8M10 2l-8 8"].map((path, i) => (
              <button
                key={path}
                type="button"
                aria-label={["最小化文档", "还原文档", "关闭文档"][i]}
                className="flex h-[19px] w-[21px] items-center justify-center bg-white"
              >
                <svg viewBox="0 0 12 12" className="size-3" fill="none" stroke="#76818c" strokeWidth="2">
                  <path d={path} />
                </svg>
              </button>
            ))}
          </div>
        </nav>
        <Toolbar />
        <div className="flex h-9 shrink-0 items-start justify-between bg-[#f0f0f0]">
          <div className="mt-[3px] flex h-[30px] items-stretch text-[16px] font-bold">
            {mainTabs.map((tab, i) => (
              <button
                key={tab}
                type="button"
                className={
                  i === 0
                    ? "my-px mr-[2px] ml-1 border border-[#9fc3ee] bg-[#bfdcfb] px-2 pb-[2px] text-[#0a18c8]"
                    : "border-l border-[#b0b0b0] px-[11px] pb-[2px]"
                }
              >
                {tab}
              </button>
            ))}
          </div>
          <div className="mt-[5px] mr-[11px] grid w-[418px]">
            <select
              aria-label="定额库"
              className="col-start-1 row-start-1 h-[22px] appearance-none border border-[#a0a0a0] bg-[#cae5cf] pl-[2px] text-[16px] leading-5 font-bold"
            >
              <option>深圳市装饰工程消耗量定额(2020)</option>
            </select>
            <span className="pointer-events-none col-start-1 row-start-1 flex h-[22px] w-[22px] items-center justify-center justify-self-end border border-[#a0a0a0] bg-[#dcdcdc]">
              <Chevron turn="rotate-180" />
            </span>
          </div>
        </div>
        <main className="flex min-h-0 flex-1">
          <div className="flex min-w-0 flex-1 flex-col border-r border-[#b0b0b0]">
            <EditBar />
            <div className="flex h-[401px] shrink-0">
              <ItemTable />
              <div className="flex">
                <VScroll before="h-[200px]" thumb="h-[156px]" />
              </div>
            </div>
            <div className="flex h-5 shrink-0 items-center bg-[#f1f1f0]">
              <span className="h-[19px] w-[339px] bg-[#c9cac9]" />
              <span className="mr-[26px] ml-auto">
                <Chevron turn="rotate-90" />
              </span>
            </div>
            <DetailPanel />
          </div>
          <div className="flex w-3 shrink-0 flex-col items-end border-l-2 border-[#c6dcf2]">
            <SideHandle direction="right" className="mt-[297px] h-[255px]" />
          </div>
          <div className="mr-[2px] flex">
            <RightPanel />
          </div>
        </main>
        <footer className="flex h-[29px] shrink-0 items-center gap-[11px] border-t border-[#cfd8dc] pl-[411px] text-[15px] whitespace-nowrap">
          <span>工程总造价：2715634.87</span>
          <span>单方造价：2715634.87</span>
          <span>技术支持电话：400-0755-699</span>
          <span>操作提示：在单元格内按空格键进入编辑状态</span>
        </footer>
        <Taskbar />
      </div>
      <div className="w-6 shrink-0">
        <div className="h-[135px] bg-[#111113]" />
      </div>

      <svg viewBox="0 0 12 19" className="absolute top-[346px] left-[522px] h-[19px] w-3">
        <path d="M1 1v14l3-3 3 6 2-1-2-6h4z" fill="#fff" stroke="#222" />
      </svg>
      <div className="absolute top-[448px] right-[72px] flex h-[58px] w-[52px] flex-col justify-between bg-white p-px text-[14px]">
        <div className="flex items-center justify-between pl-[3px] text-[#999]">
          P...
          <span className="h-[26px] w-[25px] bg-[#e6e2e4]" />
        </div>
        <button type="button" className="h-[25px] border-2 border-[#1f6db0] bg-[#e1e1e1] text-[13px] leading-none">
          开始
        </button>
      </div>
      <div className="absolute top-[544px] right-[84px] flex items-center">
        <SogouMark className="z-10 -mr-1 size-[39px]" />
        <span className="flex h-[30px] w-9 items-center justify-center bg-white pt-[2px] pl-2 font-['Liberation_Sans',sans-serif] text-[23px] text-[#4f4f9e]">
          A
        </span>
      </div>
    </div>
  );
}
